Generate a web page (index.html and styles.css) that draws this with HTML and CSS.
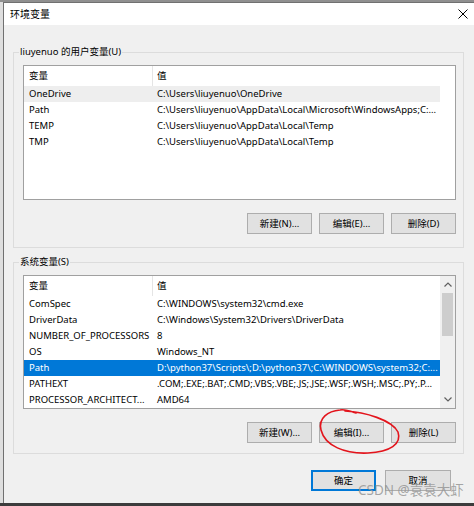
FILE: index.html
```html
<!DOCTYPE html>
<html lang="zh-CN">
<head>
<meta charset="utf-8">
<title>环境变量</title>
<link rel="stylesheet" href="styles.css">
</head>
<body>
<div class="screen">
  <div class="topstrip"></div>
  <div class="middle">
    <div class="bgwin"></div>
    <div class="dialog">
      <div class="titlebar">
        <span class="title">环境变量</span>
        <svg class="close" width="10" height="10" viewBox="0 0 10 10"><path d="M0.5 0.5 L9.5 9.5 M9.5 0.5 L0.5 9.5" stroke="#000" stroke-width="1" fill="none"/></svg>
      </div>
      <div class="content">
        <fieldset class="group group-user">
          <legend>liuyenuo 的用户变量(U)</legend>
          <div class="list list-user">
            <div class="rows">
              <div class="row head"><span class="c1">变量</span><span class="c2">值</span></div>
              <div class="row soft"><span class="c1">OneDrive</span><span class="c2">C:\Users\liuyenuo\OneDrive</span></div>
              <div class="row"><span class="c1">Path</span><span class="c2">C:\Users\liuyenuo\AppData\Local\Microsoft\WindowsApps;C:...</span></div>
              <div class="row"><span class="c1">TEMP</span><span class="c2">C:\Users\liuyenuo\AppData\Local\Temp</span></div>
              <div class="row"><span class="c1">TMP</span><span class="c2">C:\Users\liuyenuo\AppData\Local\Temp</span></div>
            </div>
            <div class="noscroll"></div>
          </div>
          <div class="btnrow">
            <button class="btn">新建(N)...</button>
            <button class="btn">编辑(E)...</button>
            <button class="btn">删除(D)</button>
          </div>
        </fieldset>
        <fieldset class="group group-sys">
          <legend>系统变量(S)</legend>
          <div class="list list-sys">
            <div class="rows">
              <div class="row head"><span class="c1">变量</span><span class="c2">值</span></div>
              <div class="row"><span class="c1">ComSpec</span><span class="c2">C:\WINDOWS\system32\cmd.exe</span></div>
              <div class="row"><span class="c1">DriverData</span><span class="c2">C:\Windows\System32\Drivers\DriverData</span></div>
              <div class="row"><span class="c1">NUMBER_OF_PROCESSORS</span><span class="c2">8</span></div>
              <div class="row"><span class="c1">OS</span><span class="c2">Windows_NT</span></div>
              <div class="row sel"><span class="c1">Path</span><span class="c2">D:\python37\Scripts\;D:\python37\;C:\WINDOWS\system32;C:...</span></div>
              <div class="row"><span class="c1">PATHEXT</span><span class="c2">.COM;.EXE;.BAT;.CMD;.VBS;.VBE;.JS;.JSE;.WSF;.WSH;.MSC;.PY;.P...</span></div>
              <div class="row"><span class="c1">PROCESSOR_ARCHITECT...</span><span class="c2">AMD64</span></div>
            </div>
            <div class="scrollbar">
              <div class="arrow"><svg width="8" height="5" viewBox="0 0 8 5"><path d="M0.5 4.5 L4 1 L7.5 4.5" stroke="#606060" stroke-width="1.2" fill="none"/></svg></div>
              <div class="track"><div class="thumb"></div></div>
              <div class="arrow"><svg width="8" height="5" viewBox="0 0 8 5"><path d="M0.5 0.5 L4 4 L7.5 0.5" stroke="#606060" stroke-width="1.2" fill="none"/></svg></div>
            </div>
          </div>
          <div class="btnrow">
            <button class="btn">新建(W)...</button>
            <button class="btn">编辑(I)...</button>
            <button class="btn">删除(L)</button>
          </div>
        </fieldset>
        <div class="footer">
          <button class="btn btn-ok">确定</button>
          <button class="btn btn-cancel">取消</button>
        </div>
      </div>
    </div>
  </div>
  <div class="bottomstrip"></div>
</div>
<svg class="annot" width="474" height="506" viewBox="0 0 474 506">
  <path d="M345 411 C365 412 392 420 398 432 C402 444 390 452 368 453 C345 454 325 446 321 430 C318 418 328 411 340 410 C345 409 350 411 356 413" stroke="#e3141c" stroke-width="1.6" fill="none" stroke-linecap="round"/>
</svg>
<div class="watermark">CSDN @袁袁大虾</div>
</body>
</html>
```

FILE: styles.css
```css
* { box-sizing: border-box; }
html, body { margin: 0; padding: 0; }
body {
  width: 474px;
  height: 506px;
  overflow: hidden;
  position: relative;
  background: #3c3c3c;
  font-family: "Noto Sans", "Noto Sans CJK SC", sans-serif;
  font-size: 9.5px;
  color: #000;
}
.screen {
  display: grid;
  grid-template-rows: 2px 501px 3px;
  height: 506px;
}
.topstrip { background: #8f8f8f; }
.bottomstrip { background: #3c3c3c; }
.middle { display: flex; min-height: 0; }
.bgwin { width: 3px; background: #dedede; }
.dialog {
  flex: 1;
  display: flex;
  flex-direction: column;
  background: #f0f0f0;
  border-left: 1px solid #707070;
  border-top: 1px solid #707070;
  overflow: hidden;
}
.titlebar {
  height: 22px;
  flex: none;
  background: #fff;
  display: flex;
  align-items: center;
  justify-content: space-between;
  padding: 0 6px 0 6px;
}
.title { font-size: 10px; line-height: 16px; }
.close { display: block; }
.content {
  padding: 19px 0 0 9px;
  display: flex;
  flex-direction: column;
}
.group {
  width: 451px;
  margin: 0;
  border: 1px solid #dcdcdc;
  min-width: 0;
}
.group legend {
  font-size: 9.5px;
  line-height: 16px;
  padding: 0 1px;
  margin-left: -4px;
}
.group-user { padding: 5px 7px 13px 9px; }
.group-sys { padding: 5px 7px 10px 9px; margin-top: 6px; }
.list {
  display: flex;
  background: #fff;
  border: 1px solid #a0a0a0;
}
.list-user { height: 135px; }
.list-sys { height: 134px; }
.rows { width: 416px; }
.noscroll { width: 15px; }
.row {
  display: grid;
  grid-template-columns: 129px 287px;
  height: 16px;
  line-height: 16px;
  white-space: nowrap;
}
.row .c1 { padding-left: 5px; overflow: hidden; }
.row .c2 { padding-left: 4px; overflow: hidden; }
.row.head { height: 20px; line-height: 20px; }
.row.head .c1 { border-right: 1px solid #e5e5e5; }
.row.soft { background: #eeeeee; }
.row.sel { background: #0078d7; color: #fff; }
.scrollbar {
  width: 15px;
  background: #f0f0f0;
  display: flex;
  flex-direction: column;
}
.arrow {
  height: 17px;
  display: flex;
  align-items: center;
  justify-content: center;
}
.arrow svg { display: block; }
.track { flex: 1; padding: 0 2px; }
.thumb { height: 43px; background: #cdcdcd; }
.btnrow {
  display: flex;
  justify-content: flex-end;
  gap: 7px;
  margin-top: 13px;
}
.btn {
  width: 65px;
  height: 21px;
  padding: 0;
  margin: 0;
  background: #e1e1e1;
  border: 1px solid #adadad;
  font-family: "Noto Sans", "Noto Sans CJK SC", sans-serif;
  font-size: 9.5px;
  line-height: 19px;
  color: #000;
}
.footer {
  display: flex;
  justify-content: flex-end;
  gap: 9px;
  margin-top: 16px;
  padding-right: 23px;
}
.btn-ok { border: 2px solid #0078d7; line-height: 17px; }
.btn-cancel { width: 66px; }
.annot {
  position: absolute;
  left: 0;
  top: 0;
  pointer-events: none;
}
.watermark {
  position: absolute;
  left: 358px;
  top: 480px;
  font-size: 13.5px;
  line-height: 20px;
  color: rgba(150, 150, 150, 0.85);
  white-space: nowrap;
  pointer-events: none;
}
```
